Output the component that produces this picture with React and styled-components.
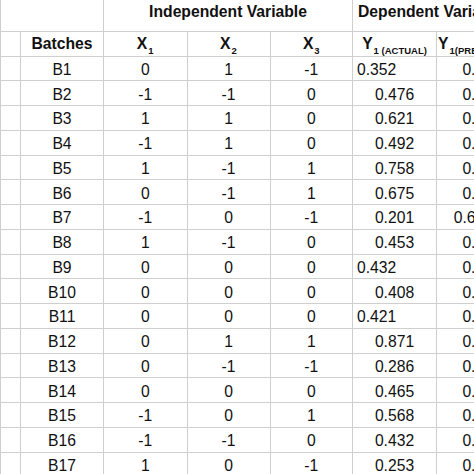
import React from 'react';
import styled, { createGlobalStyle } from 'styled-components';

const GlobalStyle = createGlobalStyle`
    html, body {
        margin: 0;
        padding: 0;
        background: #fff;
        overflow: hidden;
    }
`;

const Wrapper = styled.div`
    width: 474px;
    height: 474px;
    overflow: hidden;
    font-family: "Liberation Sans", Arial, sans-serif;
    color: #111;
`;

const Table = styled.table`
    table-layout: fixed;
    border-collapse: collapse;
    width: 519px;
    font-size: 15.7px;
`;

const GroupRow = styled.tr`
    height: 31px;
`;

const HeadRow = styled.tr`
    height: 25px;
`;

const Row = styled.tr`
    height: 24.75px;
`;

const GroupCell = styled.th`
    border: 1px solid #cfcfcf;
    border-top: none;
    font-weight: bold;
    text-align: ${props => props.align || 'center'};
    padding: 0 0 7px ${props => props.align === 'left' ? '5px' : '0'};
    white-space: nowrap;
    overflow: hidden;
`;

const HeadCell = styled.th`
    border: 1px solid #cfcfcf;
    font-weight: bold;
    text-align: ${props => props.align || 'center'};
    padding: 0 0 0 ${props => props.align === 'left' ? '1px' : '0'};
    white-space: nowrap;
    overflow: hidden;
`;

const Sub = styled.sub`
    font-size: 9.5px;
    vertical-align: -5px;
    line-height: 0;
    margin-left: 1px;
`;

const Cell = styled.td`
    border: 1px solid #cfcfcf;
    text-align: ${props => props.align || 'center'};
    padding: 3px 0 0 ${props => props.align === 'left' ? '4px' : props.shift ? `${props.shift}px` : '0'};
    white-space: nowrap;
    overflow: hidden;
`;

const columns = [20, 83, 83.5, 83, 82.5, 84, 83];

const batches = [
    ['B1', '0', '1', '-1', '0.352', '0.348', true],
    ['B2', '-1', '-1', '0', '0.476', '0.471'],
    ['B3', '1', '1', '0', '0.621', '0.617'],
    ['B4', '-1', '1', '0', '0.492', '0.488'],
    ['B5', '1', '-1', '1', '0.758', '0.752'],
    ['B6', '0', '-1', '1', '0.675', '0.669'],
    ['B7', '-1', '0', '-1', '0.201', '0.63215'],
    ['B8', '1', '-1', '0', '0.453', '0.449'],
    ['B9', '0', '0', '0', '0.432', '0.426', true],
    ['B10', '0', '0', '0', '0.408', '0.426'],
    ['B11', '0', '0', '0', '0.421', '0.426', true],
    ['B12', '0', '1', '1', '0.871', '0.866'],
    ['B13', '0', '-1', '-1', '0.286', '0.281'],
    ['B14', '0', '0', '0', '0.465', '0.426'],
    ['B15', '-1', '0', '1', '0.568', '0.571'],
    ['B16', '-1', '-1', '0', '0.432', '0.437'],
    ['B17', '1', '0', '-1', '0.253', '0.258'],
];

const App = () => {
    return (
        <Wrapper>
            <GlobalStyle />
            <Table>
                <colgroup>
                    {columns.map((w, key) => <col key={key} style={{ width: w }} />)}
                </colgroup>
                <thead>
                    <GroupRow>
                        <GroupCell colSpan={2}></GroupCell>
                        <GroupCell colSpan={3}>Independent Variable</GroupCell>
                        <GroupCell colSpan={2} align="left">Dependent Variable</GroupCell>
                    </GroupRow>
                    <HeadRow>
                        <HeadCell></HeadCell>
                        <HeadCell>Batches</HeadCell>
                        <HeadCell>X<Sub>1</Sub></HeadCell>
                        <HeadCell>X<Sub>2</Sub></HeadCell>
                        <HeadCell>X<Sub>3</Sub></HeadCell>
                        <HeadCell>Y<Sub>1 (ACTUAL)</Sub></HeadCell>
                        <HeadCell align="left">Y<Sub>1(PREDICTED)</Sub></HeadCell>
                    </HeadRow>
                </thead>
                <tbody>
                    {batches.map(([name, x1, x2, x3, actual, predicted, leftActual]) => (
                        <Row key={name}>
                            <Cell></Cell>
                            <Cell>{name}</Cell>
                            <Cell>{x1}</Cell>
                            <Cell>{x2}</Cell>
                            <Cell>{x3}</Cell>
                            <Cell align={leftActual ? 'left' : undefined}>{actual}</Cell>
                            <Cell shift={8}>{predicted}</Cell>
                        </Row>
                    ))}
                </tbody>
            </Table>
        </Wrapper>
    );
};

export default App;
